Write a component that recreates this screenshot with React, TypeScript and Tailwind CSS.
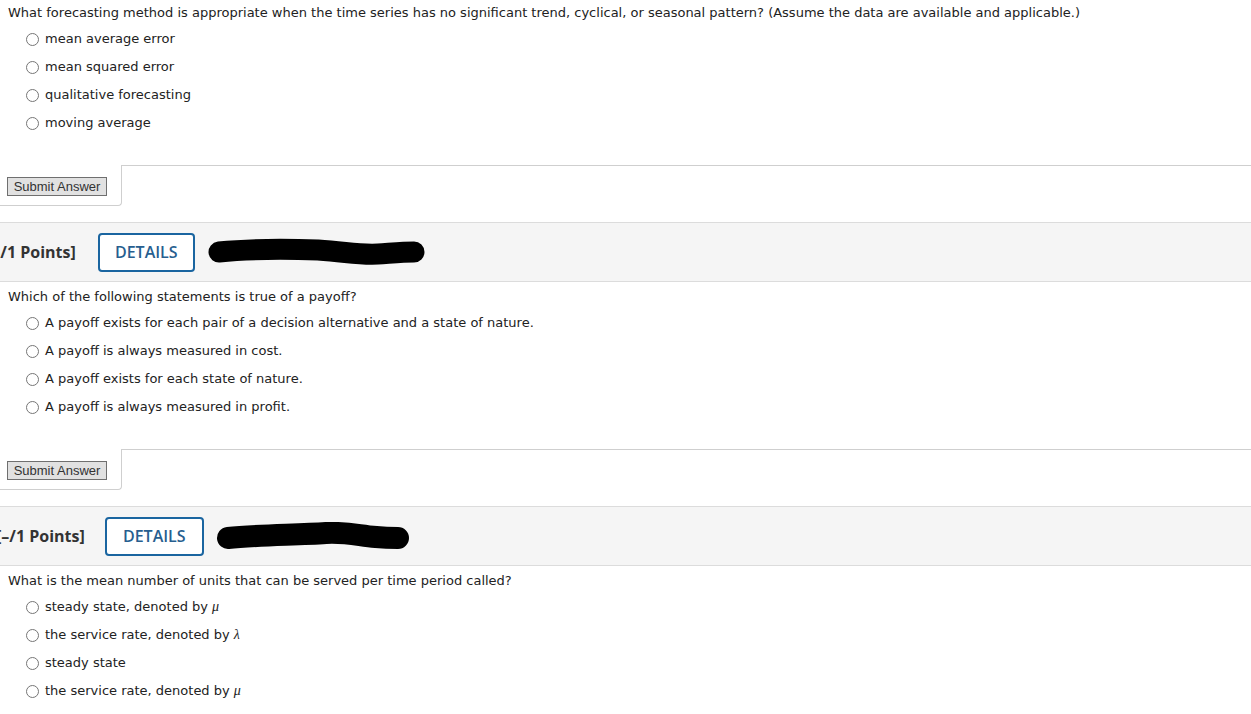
import React from "react";

type Opt = { text: string; sym?: string };

const q1: Opt[] = [
  { text: "mean average error" },
  { text: "mean squared error" },
  { text: "qualitative forecasting" },
  { text: "moving average" },
];

const q2: Opt[] = [
  { text: "A payoff exists for each pair of a decision alternative and a state of nature." },
  { text: "A payoff is always measured in cost." },
  { text: "A payoff exists for each state of nature." },
  { text: "A payoff is always measured in profit." },
];

const q3: Opt[] = [
  { text: "steady state, denoted by ", sym: "μ" },
  { text: "the service rate, denoted by ", sym: "λ" },
  { text: "steady state" },
  { text: "the service rate, denoted by ", sym: "μ" },
];

function Options({ items }: { items: Opt[] }) {
  return (
    <ul className="mt-1">
      {items.map((o, i) => (
        <li key={i} className="flex items-center h-[28px] pl-[26px]">
          <span className="w-[13px] h-[13px] rounded-full border border-[#767676] bg-white shrink-0" />
          <span className="ml-[6px] leading-4">
            {o.text}
            {o.sym && (
              <span className="italic text-[14px]" style={{ fontFamily: '"Liberation Serif", serif' }}>
                {o.sym}
              </span>
            )}
          </span>
        </li>
      ))}
    </ul>
  );
}

function SubmitRow() {
  return (
    <div className="flex mt-[28px]">
      <div className="w-[122px] h-[41px] border-r border-b border-[#cfcfcf] rounded-br-[4px] pl-[7px] pt-[12px]">
        <button
          className="w-[100px] h-[19px] bg-[#e1e1e1] border border-[#6f6f6f] text-[13px] leading-none text-[#333]"
          style={{ fontFamily: '"Liberation Sans", Arial, sans-serif' }}
        >
          Submit Answer
        </button>
      </div>
      <div className="flex-1 border-t border-[#cfcfcf]" />
    </div>
  );
}

function Band({ label, offset, blob }: { label: string; offset: string; blob: React.ReactNode }) {
  return (
    <div
      className="mt-4 h-[60px] bg-[#f5f5f5] border-y border-[#dcdcdc] flex items-center overflow-hidden"
      style={{ fontFamily: '"Open Sans", sans-serif' }}
    >
      <span className={`text-[16px] font-bold text-[#333] whitespace-nowrap ${offset}`}>{label}</span>
      {blob}
    </div>
  );
}

export default function App() {
  return (
    <div
      className="w-[1251px] min-h-[714px] bg-white text-[13px] text-[#222] overflow-hidden"
      style={{ fontFamily: '"DejaVu Sans", Verdana, sans-serif' }}
    >
      {/* question 1 */}
      <p className="pt-[5px] pl-2 leading-4">
        What forecasting method is appropriate when the time series has no significant trend, cyclical, or seasonal
        pattern? (Assume the data are available and applicable.)
      </p>
      <Options items={q1} />
      <SubmitRow />

      <Band
        label="[–/1 Points]"
        offset="ml-[-13px]"
        blob={
          <>
            <button className="ml-[22px] w-[97px] h-[39px] bg-white border-2 border-[#1a65a0] rounded-[4px] text-[16px] font-semibold text-[#275e8f]">
              DETAILS
            </button>
            <svg width="218" height="30" viewBox="0 0 218 30" className="ml-[13px] mt-[2px]">
              <path
                d="M11,14 C40,11 80,11 110,12 C140,14 150,17 170,16 C185,15 195,14 206,14"
                stroke="#000"
                strokeWidth="21"
                strokeLinecap="round"
                fill="none"
              />
            </svg>
          </>
        }
      />

      {/* question 2 */}
      <p className="pt-[7px] pl-2 leading-4">Which of the following statements is true of a payoff?</p>
      <Options items={q2} />
      <SubmitRow />

      <Band
        label="[–/1 Points]"
        offset="ml-[-4px]"
        blob={
          <>
            <button className="ml-[20px] w-[99px] h-[39px] bg-white border-2 border-[#1a65a0] rounded-[4px] text-[16px] font-semibold text-[#275e8f]">
              DETAILS
            </button>
            <svg width="194" height="30" viewBox="0 0 194 30" className="ml-[12px] mt-[2px]">
              <path
                d="M12,16 C40,13 80,13 110,11 C130,10 140,13 160,15 C170,16 178,16 182,16"
                stroke="#000"
                strokeWidth="22"
                strokeLinecap="round"
                fill="none"
              />
            </svg>
          </>
        }
      />

      {/* question 3 */}
      <p className="pt-[7px] pl-2 leading-4">What is the mean number of units that can be served per time period called?</p>
      <Options items={q3} />
    </div>
  );
}
